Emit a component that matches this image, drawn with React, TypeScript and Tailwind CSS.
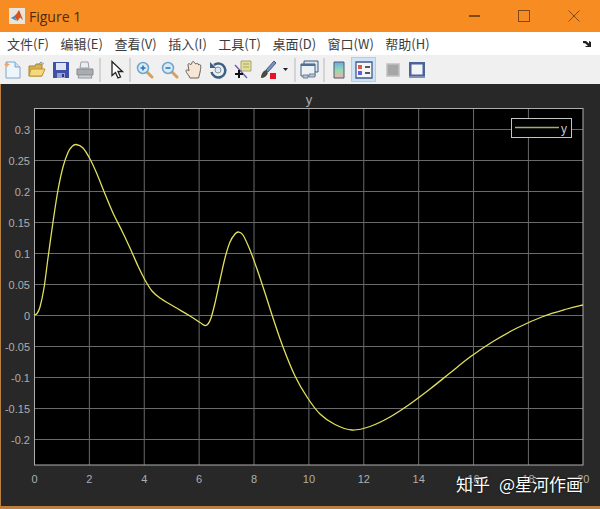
const menus = ["文件(F)", "编辑(E)", "查看(V)", "插入(I)", "工具(T)", "桌面(D)", "窗口(W)", "帮助(H)"];

const xTicks = [0, 2, 4, 6, 8, 10, 12, 14, 16, 18, 20];
const yTicks = ["0.3", "0.25", "0.2", "0.15", "0.1", "0.05", "0", "-0.05", "-0.1", "-0.15", "-0.2"];

// curve traced from the picture, in page pixels
const points: [number, number][] = [
  [34, 315], [37, 313.5], [40, 307], [44, 288], [48, 258], [53, 222], [58, 190], [63, 167], [68, 152.5], [72, 146.5], [76, 144.5],
  [83, 148], [90, 159], [97, 174], [105, 194], [113, 213], [122, 231], [130, 248], [138, 266], [145, 280], [152, 291], [160, 298],
  [173, 306], [190, 316], [200, 322.5], [205, 325.5], [208, 324], [211, 318], [215, 303], [220, 280], [225, 258], [230, 242],
  [235, 234], [238.5, 232], [243, 235], [250, 250], [257, 269], [265, 293], [273, 318], [283, 347], [295, 376], [307, 397],
  [320, 414], [335, 424.5], [352, 430], [370, 426.5], [390, 417], [410, 404], [430, 389], [450, 373], [470, 357],
  [493, 341.5], [517, 328], [543, 316.5], [567, 309], [583, 305],
];

const curve = points
  .map((p, i) => {
    if (i === 0) return `M${p[0]} ${p[1]}`;
    const p0 = points[i - 2] ?? points[i - 1];
    const p1 = points[i - 1];
    const p3 = points[i + 1] ?? p;
    const c1x = p1[0] + (p[0] - p0[0]) / 6;
    const c1y = p1[1] + (p[1] - p0[1]) / 6;
    const c2x = p[0] - (p3[0] - p1[0]) / 6;
    const c2y = p[1] - (p3[1] - p1[1]) / 6;
    return `C${c1x} ${c1y} ${c2x} ${c2y} ${p[0]} ${p[1]}`;
  })
  .join(" ");

const Sep = ({ className = "" }: { className?: string }) => <div className={`h-[24px] w-[2px] bg-[#d4d4d4] ${className}`} />;

const Tool = ({ children, className = "" }: { children: React.ReactNode; className?: string }) => (
  <div className={`flex h-[24px] w-[24px] shrink-0 items-center justify-center ${className}`}>
    <svg width="20" height="20" viewBox="0 0 20 20">{children}</svg>
  </div>
);

const Magnifier = ({ minus }: { minus?: boolean }) => (
  <>
    <path d="M11 11l6 6" stroke="#d9a05b" strokeWidth="3" strokeLinecap="round" />
    <circle cx="8" cy="8" r="5.5" fill="#d6ecf8" stroke="#6fa4c8" strokeWidth="1.5" />
    <path d="M5.5 8h5" stroke="#2f6fb5" strokeWidth="1.5" />
    {!minus && <path d="M8 5.5v5" stroke="#2f6fb5" strokeWidth="1.5" />}
  </>
);

const App = () => {
  return (
    <div className="h-[509px] w-[600px] overflow-hidden bg-[#b9803f] pb-[3px] pl-px font-['Noto_Sans_CJK_SC',sans-serif]">
      {/* title bar */}
      <div className="-ml-px flex h-[32px] items-center bg-[#f78c23] pl-[9px] pr-[20px]">
        <div className="flex h-[16px] w-[16px] items-center justify-center bg-[#e9e4dc]">
          <svg width="14" height="14" viewBox="0 0 14 14">
            <path d="M1 9l3-1.5 2-2L9 1c1 2 2.500 6 4 10-1-.5-2-2-3-2.500L7.500 12 5 8.500z" fill="#d9531e" />
            <path d="M1 9l3-1.500 2-2-1 3.500 2 3z" fill="#4b86b4" />
          </svg>
        </div>
        <span className="ml-[4px] font-['Open_Sans',sans-serif] text-[14px] text-[#4a2d10]">Figure 1</span>
        <div className="ml-auto flex items-center gap-[38px]">
          <div className="h-[1.500px] w-[11px] bg-[#7d4a18]" />
          <div className="h-[12px] w-[12px] border border-[#7d4a18]" />
          <svg width="12" height="12" viewBox="0 0 12 12">
            <path d="M.5.500l11 11M11.500.500l-11 11" stroke="#7d4a18" strokeWidth="1" />
          </svg>
        </div>
      </div>

      {/* menu bar */}
      <div className="-ml-px flex h-[23px] items-center gap-[11.500px] bg-white pl-[7px] pr-[8px] text-[13px] leading-none text-[#3c3c3c]">
        {menus.map((m) => (
          <span key={m}>{m}</span>
        ))}
        <svg className="ml-auto" width="9" height="8" viewBox="0 0 9 8">
          <path d="M0 1h3l3 2.500V1l2 1v5H3L2 6h3L2.500 3.500 0 3z" fill="#222" />
        </svg>
      </div>

      {/* toolbar */}
      <div className="-ml-px flex h-[29px] items-center bg-[#f0f0f0] pl-px">
        <Tool>
          <path d="M3 2h9l5 5v11H3z" fill="#eef6fc" stroke="#7fa6c9" />
          <path d="M12 2v5h5" fill="#cfe2f2" stroke="#7fa6c9" />
          <path d="M4 1.500l1 2 2 1-2 1-1 2-1-2-2-1 2-1z" fill="#f2a55c" />
        </Tool>
        <Tool>
          <path d="M2 6h6l1-2h6v12H2z" fill="#d9b04a" stroke="#a8842f" />
          <path d="M11 5l3-3 3 2" fill="none" stroke="#8a9a8a" />
          <path d="M2 16l2-7h14l-3 7z" fill="#f5d97a" stroke="#b8953a" />
        </Tool>
        <Tool>
          <path d="M2 2h16v16H2z" fill="#3f51a8" />
          <path d="M5 3h10v7H5z" fill="#dfe4f4" />
          <path d="M6 13h8v5H6z" fill="#9aa4c8" />
          <path d="M11 14h2v3h-2z" fill="#2c3a80" />
        </Tool>
        <Tool>
          <path d="M6 2h7l1 6H5z" fill="#eceff2" stroke="#9a9ea4" />
          <path d="M2 9h16v6H2z" fill="#a9adb2" stroke="#85898e" />
          <path d="M4 15h12l1 3H3z" fill="#cdd0d4" stroke="#94989c" />
        </Tool>
        <Sep className="ml-[2px]" />
        <Tool className="ml-[4px]">
          <path d="M5 1.500v14l3.500-3 2.500 5.500 2.500-1-2.500-5.500h4.500z" fill="#fff" stroke="#222" strokeWidth="1.300" />
        </Tool>
        <Sep />
        <Tool className="ml-[2px]">
          <Magnifier />
        </Tool>
        <Tool className="ml-px">
          <Magnifier minus />
        </Tool>
        <Tool>
          <path d="M6 18c-1-3-4-5-4-7s2-1 3 0L4 5c0-2 2-2 2.500 0L8 3c0-2 2-2 2.500 0L12 4c1-1 2.500-1 2.500 1l1-.500c1.500 0 1.500 2 1 5-.500 3-1 6-2 8.500z" fill="#f7e6d6" stroke="#6e6258" />
        </Tool>
        <Tool>
          <path d="M6 5a7 7 0 1 1-2.500 7" fill="none" stroke="#3d5f82" strokeWidth="2.500" />
          <path d="M2 2v6h6z" fill="#3d5f82" />
          <circle cx="10" cy="10" r="3" fill="#dfe8ef" stroke="#7c95ab" />
        </Tool>
        <Tool className="ml-px">
          <path d="M8 1h10v10H8z" fill="#e3df9a" stroke="#a6a76b" />
          <path d="M10 4h6M10 7h6" stroke="#a6a76b" />
          <path d="M2 5l12 13" stroke="#6a55b8" strokeWidth="1.300" />
          <path d="M2 14h8M6 10v8" stroke="#111" strokeWidth="2" />
        </Tool>
        <Tool className="ml-px">
          <path d="M8 10l8-9 2 2-8 9z" fill="#7d90c4" stroke="#4c5a8a" />
          <path d="M3 18c0-4 2-7 5-8l2 3c-1 3-4 5-7 5z" fill="#4a4a42" />
          <path d="M12 13h6v6h-6z" fill="#e8112a" />
        </Tool>
        <svg className="ml-[3px]" width="5" height="3" viewBox="0 0 5 3">
          <path d="M0 0h5L2.500 3z" fill="#222" />
        </svg>
        <Sep className="ml-[6px]" />
        <Tool className="ml-px">
          <path d="M5 1h14v11H5z" fill="#dfe7ef" stroke="#3d5f82" />
          <path d="M2 4h14v12H2z" fill="#eef2f6" stroke="#3d5f82" />
          <path d="M2 4h14v2H2z" fill="#4e6f92" />
          <path d="M4 15h5v3H4zM10 14h6v3h-6z" fill="#b7c4cf" stroke="#6e8598" />
        </Tool>
        <Sep className="ml-[2px]" />
        <Tool className="ml-[2px]">
          <defs>
            <linearGradient id="cbar" x1="0" y1="0" x2="0" y2="1">
              <stop offset="0" stopColor="#6fa8e8" />
              <stop offset="0.5" stopColor="#8fdcb0" />
              <stop offset="1" stopColor="#f3b0a8" />
            </linearGradient>
          </defs>
          <path d="M5 2h10v16H5z" fill="url(#cbar)" stroke="#4a5a70" />
        </Tool>
        <div className="flex h-[25px] w-[25px] items-center justify-center border border-[#a9d0f0] bg-[#cde4f7]">
          <svg width="18" height="18" viewBox="0 0 18 18">
            <path d="M1 1h16v16H1z" fill="#f4f6f8" stroke="#46588a" strokeWidth="1.300" />
            <path d="M3 4h4v4H3z" fill="#e0574c" />
            <path d="M3 10h4v4H3z" fill="#5f5fd8" />
            <path d="M10 6h5M10 12h5" stroke="#222" strokeWidth="1.500" />
          </svg>
        </div>
        <Tool className="ml-[5px]">
          <path d="M4 4h12v12H4z" fill="#a6a6a6" stroke="#c0c0c0" strokeWidth="1.500" />
        </Tool>
        <Tool>
          <path d="M2 2h16v16H2z" fill="#4d6396" />
          <path d="M4.500 4.500h11v10h-11z" fill="#f3f4f6" />
          <path d="M2 16h16v2H2z" fill="#7f90b8" />
        </Tool>
      </div>

      {/* figure canvas */}
      <div className="relative h-[422px] bg-[#282828]">
        <svg className="block" width="599" height="422" viewBox="1 84 599 422" fontFamily="'Liberation Sans', sans-serif" fontSize="11" fill="#aeaeae">
          <rect x="34.500" y="108.500" width="548.500" height="356.500" fill="#000" />
          {xTicks.slice(1, -1).map((t) => (
            <path key={t} d={`M${34.500 + t * 27.44} 108v357`} stroke="#6a6a6a" />
          ))}
          {yTicks.map((t, i) => (
            <path key={t} d={`M34 ${129.500 + i * 31}h549`} stroke="#6a6a6a" />
          ))}
          <rect x="34.500" y="108.500" width="548.500" height="356.500" fill="none" stroke="#aeaeae" />
          {xTicks.map((t) => (
            <text key={t} x={34.500 + t * 27.44} y="483" textAnchor="middle">
              {t}
            </text>
          ))}
          {yTicks.map((t, i) => (
            <text key={t} x="30" y={133.500 + i * 31} textAnchor="end">
              {t}
            </text>
          ))}
          <text x="309" y="104" textAnchor="middle" fontSize="13">
            y
          </text>
          <path d={curve} fill="none" stroke="#e0e05c" strokeWidth="1.300" />
          <rect x="511.500" y="118.500" width="60" height="19" fill="#000" stroke="#c4c4c4" />
          <path d="M515 127.500h44" stroke="#a8aa6e" strokeWidth="1.500" />
          <text x="561" y="133" fontSize="12" fill="#c4c4c4">
            y
          </text>
        </svg>
        <div className="absolute left-[455px] top-[389px] flex items-center gap-[9px] text-[17px] leading-[22px] text-white [text-shadow:0_0_2px_#000]">
          <span>知乎</span>
          <span>@星河作画</span>
        </div>
      </div>
    </div>
  );
};

export default App;
